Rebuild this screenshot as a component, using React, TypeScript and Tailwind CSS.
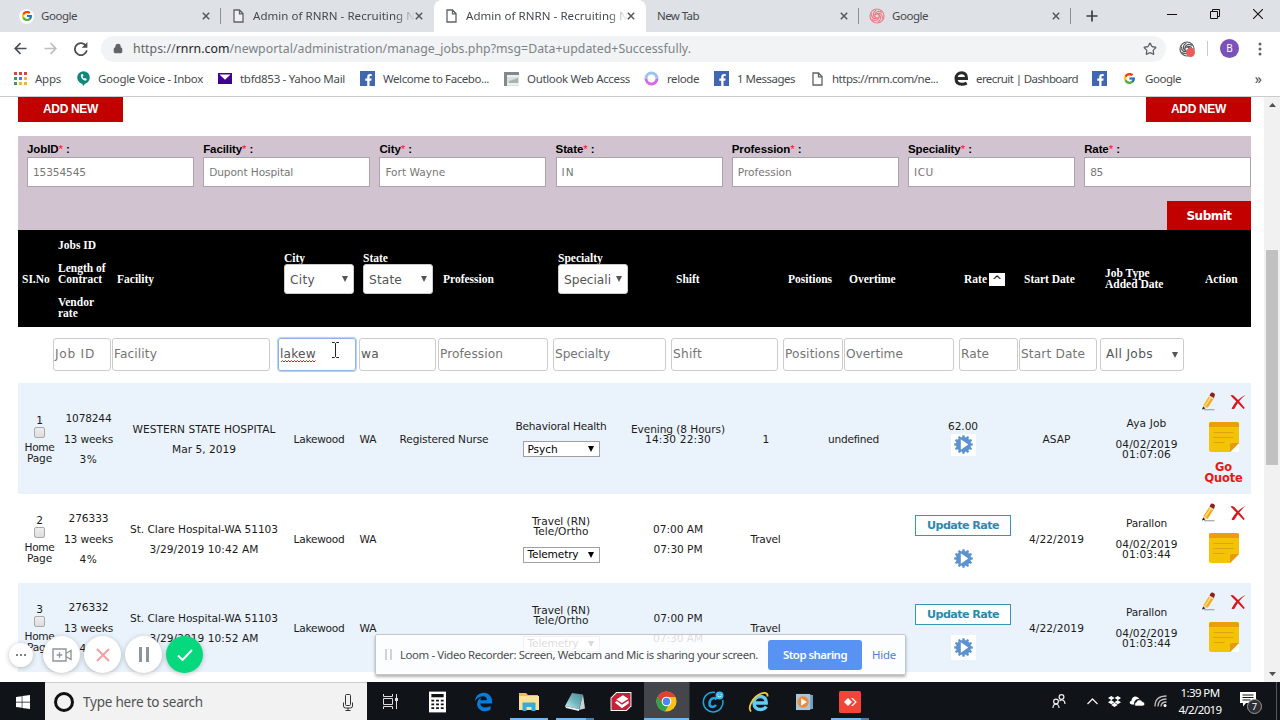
import { useLayoutEffect, useRef, type ReactNode } from "react";
import { FcGoogle } from "react-icons/fc";
import { FaEdgeLegacy, FaWindows, FaDropbox, FaFacebookF } from "react-icons/fa";
import { Lock, Star } from "lucide-react";

/* Single-line label that spreads its letters over a set width. */
function Fit({ w, className = "", children }: { w: number; className?: string; children: ReactNode }) {
  const ref = useRef<HTMLSpanElement>(null);
  useLayoutEffect(() => {
    const el = ref.current;
    if (!el) return;
    el.style.letterSpacing = "0px";
    const natural = el.getBoundingClientRect().width;
    const count = (el.textContent || "").length;
    if (count > 0) el.style.letterSpacing = `${(w - natural) / count}px`;
  }, [w]);
  return (
    <span ref={ref} className={"inline-block whitespace-pre " + className}>
      {children}
    </span>
  );
}

const Close = ({ className = "" }: { className?: string }) => (
  <svg className={"h-[8px] w-[8px] shrink-0 " + className} viewBox="0 0 8 8">
    <path d="M.8.8 7.2 7.2M7.2.8.8 7.2" stroke="#54585c" strokeWidth="1.5" />
  </svg>
);

const Page = ({ className = "" }: { className?: string }) => (
  <svg className={"h-[14px] w-[11px] shrink-0 " + className} viewBox="0 0 11 14">
    <path d="M1 1h5.5L10 4.6V13H1zM6.5 1v3.8H10" fill="#fff" fillOpacity=".5" stroke="#5f6368" strokeWidth="1.3" />
  </svg>
);

const Swirl = ({ color }: { color: string }) => (
  <svg className="h-[16px] w-[16px] shrink-0" viewBox="0 0 16 16" fill="none" stroke={color} strokeWidth="1.2">
    <circle cx="8" cy="8" r="7" />
    <circle cx="8" cy="8" r="2.2" />
    {[0, 60, 120, 180, 240, 300].map((a) => (
      <path key={a} d="M8 5.6C11 4.6 13.4 6.2 13.6 10.4" transform={`rotate(${a} 8 8)`} />
    ))}
  </svg>
);

const Fb = ({ className = "" }: { className?: string }) => (
  <div className={"flex h-[15px] w-[15px] shrink-0 items-end justify-end bg-[#4267b2] pr-[2px] " + className}>
    <FaFacebookF className="h-[12px] w-[9px] text-white" />
  </div>
);

function TabStrip() {
  return (
    <div className="flex h-8 shrink-0 items-center bg-[#dee1e6] text-[11.5px] text-[#45494d]">
      <div className="flex h-4 w-[221px] items-center border-r border-[#8d9196] pl-[19px]">
        <div className="flex h-[15px] w-[15px] items-center justify-center rounded-full bg-white">
          <FcGoogle className="h-[12px] w-[12px]" />
        </div>
        <Fit w={36} className="ml-[7px]">Google</Fit>
        <Close className="mr-[10px] ml-auto" />
      </div>
      <div className="flex h-full w-[213px] items-center pl-[12px]">
        <Page />
        <Fit w={162} className="mr-[-2px] ml-[9px] [mask-image:linear-gradient(to_right,#000_88%,transparent)]">Admin of RNRN - Recruiting N</Fit>
        <Close className="mr-[11px] ml-auto" />
      </div>
      <div className="flex h-full w-[212px] items-center rounded-t-lg bg-white pl-[12px]">
        <Page />
        <Fit w={162} className="mr-[-2px] ml-[9px] [mask-image:linear-gradient(to_right,#000_88%,transparent)]">Admin of RNRN - Recruiting N</Fit>
        <Close className="mr-[11px] ml-auto" />
      </div>
      <div className="flex h-4 w-[213px] items-center border-r border-[#8d9196] pl-[11px]">
        <Fit w={42}>New Tab</Fit>
        <Close className="mr-[10px] ml-auto" />
      </div>
      <div className="flex h-4 w-[212px] items-center border-r border-[#8d9196] pl-[10px]">
        <Swirl color="#ee7c86" />
        <Fit w={36} className="ml-[7px]">Google</Fit>
        <Close className="mr-[10px] ml-auto" />
      </div>
      <svg className="ml-[15px] h-[12px] w-[12px]" viewBox="0 0 12 12">
        <path d="M6 .5v11M.5 6h11" stroke="#3c4043" strokeWidth="1.7" />
      </svg>
      <div className="mb-1 ml-auto flex items-center gap-[33px] pr-[17px]">
        <svg className="h-[10px] w-[10px]" viewBox="0 0 10 10"><path d="M0 5.500h10" stroke="#111" /></svg>
        <svg className="h-[10px] w-[10px]" viewBox="0 0 10 10" fill="none" stroke="#111"><path d="M.5 2.500h7v7h-7zM2.500 2.500v-2h7v7h-2" /></svg>
        <svg className="h-[10px] w-[10px]" viewBox="0 0 10 10"><path d="M0 0l10 10M10 0 0 10" stroke="#111" strokeWidth="1.1" /></svg>
      </div>
    </div>
  );
}

function Toolbar() {
  return (
    <div className="flex h-[33px] shrink-0 items-center bg-white pl-[14px]">
      <svg className="h-[13px] w-[13px]" viewBox="0 0 14 14" fill="none" stroke="#4a4d51" strokeWidth="1.800"><path d="M13.500 7H1.500M7 1.300 1.300 7 7 12.700" /></svg>
      <svg className="ml-[17px] h-[13px] w-[13px]" viewBox="0 0 14 14" fill="none" stroke="#bcbec1" strokeWidth="1.800"><path d="M.5 7h12M7 1.300 12.700 7 7 12.700" /></svg>
      <svg className="ml-[17px] h-[14px] w-[14px]" viewBox="0 0 14 14" fill="none" stroke="#4a4d51" strokeWidth="1.8"><path d="M12 4A6 6 0 1 0 12.800 8.300" /><path d="M13.400 0v5.700H7.700z" fill="#4a4d51" stroke="none" /></svg>
      <div className="ml-[13px] flex h-[26px] w-[1065px] items-center rounded-full bg-[#f1f3f4] pr-[9px] pl-[12px] text-[12.300px] text-[#7d8286]">
        <Lock className="h-[11px] w-[10px] text-[#5f6368]" fill="#5f6368" strokeWidth={2.600} />
        <Fit w={558} className="mt-[2px] ml-[10px]">
          <span className="text-[#5f6368]">https://</span>
          <span className="text-[#202124]">rnrn.com</span>
          /newportal/administration/manage_jobs.php?msg=Data+updated+Successfully.
        </Fit>
        <Star className="ml-auto h-[14px] w-[14px] text-[#5f6368]" strokeWidth={2.200} />
      </div>
      <div className="relative ml-[13px] h-4 w-4">
        <Swirl color="#55585c" />
        <div className="absolute right-0 bottom-0 h-[9px] w-[9px] rounded-full bg-[#ee5a5a]" />
      </div>
      <div className="ml-[12px] h-[15px] w-px bg-[#c8cacd]" />
      <div className="ml-[12px] flex h-[19px] w-[19px] items-center justify-center rounded-full bg-[#7b52b9] text-[10px] text-white">B</div>
      <svg className="ml-[19px] h-[14px] w-[4px]" viewBox="0 0 4 14" fill="#5f6368"><circle cx="2" cy="2" r="1.500" /><circle cx="2" cy="7" r="1.500" /><circle cx="2" cy="12" r="1.500" /></svg>
    </div>
  );
}

function Bookmarks() {
  const dots = ["#d9453a", "#d9453a", "#d9453a", "#3f9a5a", "#3f7fe8", "#eeb63a", "#3f9a5a", "#eeb63a", "#eeb63a"];
  return (
    <div className="flex h-[32px] shrink-0 items-center border-b border-[#c9cbcd] bg-white pb-[4px] pl-[14px] text-[11.500px] text-[#484c50]">
      <div className="grid h-[13px] w-[13px] grid-cols-3 gap-[2px]">
        {dots.map((c, i) => <div key={i} style={{ background: c }} />)}
      </div>
      <Fit w={26} className="ml-[8px]">Apps</Fit>
      <svg className="ml-[16px] h-[15px] w-[13px]" viewBox="0 0 13 15"><circle cx="6.500" cy="6.500" r="6.300" fill="#12887a" /><path d="M4 11h5l-2.500 4z" fill="#12887a" /><path d="M4 3.500c-.8 3 2 6.500 5.200 6l.6-1.600-1.800-1-1 .7C6 7 5.500 6 5.600 5.400l1-.6-.9-1.900z" fill="#fff" /></svg>
      <Fit w={105} className="ml-[8px]">Google Voice - Inbox</Fit>
      <svg className="ml-[15px] h-[11px] w-[14px]" viewBox="0 0 14 11"><path d="M0 0h14v11H0z" fill="#400090" /><path d="M1.500 1.500h11L7 6.800z" fill="#fff" /></svg>
      <Fit w={105} className="ml-[8px]">tbfd853 - Yahoo Mail</Fit>
      <Fb className="ml-[15px]" />
      <Fit w={106} className="ml-[8px]">Welcome to Facebo...</Fit>
      <svg className="ml-[15px] h-[14px] w-[15px]" viewBox="0 0 15 14"><path d="M0 0h15v14H0z" fill="#dcdfdf" /><path d="M0 0h15v3H0zM0 3h3v11H0z" fill="#85888a" /><path d="M5 9l9-3v5H5z" fill="#a7b3ad" /><path d="M3 4h12M3 12h12" stroke="#fff" /></svg>
      <Fit w={103} className="ml-[8px]">Outlook Web Access</Fit>
      <svg className="ml-[14px] h-[15px] w-[15px]" viewBox="0 0 15 15" fill="none" strokeWidth="3"><path d="M2 7.500a5.500 5.500 0 0 1 11 0" stroke="#9cc4ef" /><path d="M2 7.500a5.500 5.500 0 0 0 11 0" stroke="#d66be8" /></svg>
      <Fit w={32} className="ml-[8px]">relode</Fit>
      <Fb className="ml-[15px]" />
      <Fit w={58} className="ml-[8px]">1 Messages</Fit>
      <Page className="ml-[17px]" />
      <Fit w={106} className="ml-[9px]">https://rnrn.com/ne...</Fit>
      <svg className="ml-[16px] h-[15px] w-[15px]" viewBox="0 0 15 15" fill="none" stroke="#27292b" strokeWidth="3"><path d="M2.500 7.500h10C12.700 3.500 10.500 1.700 7.700 1.700 4.500 1.700 2 4 2 7.600c0 3.800 2.500 5.700 5.900 5.700 2 0 3.600-.5 4.800-1.300" /></svg>
      <Fit w={102} className="ml-[7px]">erecruit | Dashboard</Fit>
      <Fb className="ml-[14px]" />
      <FcGoogle className="ml-[16px] h-[13px] w-[13px]" />
      <Fit w={36} className="ml-[9px]">Google</Fit>
      <span className="mr-[18px] ml-auto text-[14px] leading-none">»</span>
    </div>
  );
}

const fields = [
  ["JobID", "15354545", 53],
  ["Facility", "Dupont Hospital", 84],
  ["City", "Fort Wayne", 60],
  ["State", "IN", 13],
  ["Profession", "Profession", 54],
  ["Speciality", "ICU", 20],
  ["Rate", "85", 13],
] as const;

function AddForm() {
  return (
    <div className="mt-[14px] flex h-[94px] shrink-0 flex-col bg-[#d1c4d0] pl-[9px]">
      <div className="flex pt-[7px]">
        {fields.map(([label, value, w]) => (
          <div key={label} className="w-[176.200px] shrink-0">
            <div className="h-[14px] font-['Liberation_Sans',sans-serif] text-[11.500px] leading-[13px] font-bold tracking-[-0.1px] text-black">
              {label}<span className="font-normal text-[#f01818]">*</span> :
            </div>
            <div className="flex h-[30px] w-[167px] items-center border border-[#a9a3aa] bg-white pt-[2px] pl-[5px] text-[10.600px] text-[#777]">
              <Fit w={w}>{value}</Fit>
            </div>
          </div>
        ))}
      </div>
      <div className="mt-auto flex h-[29px] w-[84px] items-center justify-center self-end bg-[#c30000] text-[12px] font-bold text-white">
        <Fit w={45}>Submit</Fit>
      </div>
    </div>
  );
}

const Arrow = ({ className = "" }: { className?: string }) => (
  <svg className={"h-[6px] w-[6px] shrink-0 " + className} viewBox="0 0 6 6"><path d="M0 0h6L3 6z" fill="currentColor" /></svg>
);

const HeadSelect = ({ label, value, w }: { label: string; value: string; w: number }) => (
  <div className="-mt-[12px] flex flex-col">
    <span className="h-[11px]">{label}</span>
    <div className="flex h-[30px] w-[70px] items-center rounded-[3px] border border-[#ccc] bg-white pt-px pr-[5px] pl-[5px] font-['DejaVu_Sans',sans-serif] text-[12.200px] leading-[14px] font-normal text-[#555]">
      <Fit w={w} className="pt-[2px]">{value}</Fit>
      <Arrow className="ml-auto" />
    </div>
  </div>
);

function TableHead() {
  return (
    <div className="grid h-[97px] shrink-0 grid-cols-[36px_59px_167px_79px_80px_115px_118px_112px_61px_115px_60px_81px_100px_46px] items-center bg-black pt-px pl-[4px] font-['Liberation_Serif',serif] text-[11.500px] leading-[11px] font-bold text-white">
      <span>SI.No</span>
      <div className="flex flex-col gap-[12px]"><span>Jobs ID</span><span>Length of<br />Contract</span><span>Vendor<br />rate</span></div>
      <span>Facility</span>
      <HeadSelect label="City" value="City" w={25} />
      <HeadSelect label="State" value="State" w={33} />
      <span>Profession</span>
      <HeadSelect label="Specialty" value="Speciali" w={47} />
      <span>Shift</span>
      <span>Positions</span>
      <span>Overtime</span>
      <div className="flex items-center gap-[2px]">Rate<span className="h-[13px] w-[16px] bg-white text-center font-['DejaVu_Sans',sans-serif] text-[12px] leading-[17px] font-normal text-black">^</span></div>
      <span>Start Date</span>
      <span>Job Type<br />Added Date</span>
      <span>Action</span>
    </div>
  );
}

const Filter = ({ w, tw, text, className = "" }: { w: string; tw: number; text: string; className?: string }) => (
  <div className={"flex h-[33px] items-center rounded-[3px] border pl-px " + w + " " + (className || "border-[#ccc] text-[#757575]")}>
    <Fit w={tw}>{text}</Fit>
  </div>
);

function Filters() {
  return (
    <div className="grid h-[56px] shrink-0 grid-cols-[59px_166px_81px_79px_115px_118px_112px_61px_115px_60px_81px_84px] items-center pb-[2px] pl-[35px] text-[12.200px]">
      <Filter w="w-[58px]" tw={40} text="Job ID" />
      <Filter w="w-[158px]" tw={43} text="Facility" />
      <div className="relative">
        <Filter w="w-[78px]" tw={36} text="lakew" className="border-[#8fb3e6] pl-[2px] text-[#555] shadow-[0_0_1px_1px_#b8d0f2]" />
        <svg className="absolute top-[22px] left-[3px] h-[3px] w-[35px]" viewBox="0 0 35 3"><path d="M0 2l1.500-1.500L3 2l1.500-1.500L6 2l1.500-1.500L9 2l1.500-1.500L12 2l1.500-1.500L15 2l1.500-1.500L18 2l1.500-1.500L21 2l1.500-1.500L24 2l1.500-1.500L27 2l1.500-1.500L30 2l1.500-1.500L33 2l1.500-1.500" stroke="#e02020" fill="none" /></svg>
        <svg className="absolute top-[4px] left-[54px] h-[16px] w-[7px]" viewBox="0 0 7 16" fill="none" stroke="#222"><path d="M0 .5h2.500l1 1 1-1H7M3.500 1.500v13M0 15.500h2.500l1-1 1 1H7" /></svg>
      </div>
      <Filter w="w-[77px]" tw={18} text="wa" className="border-[#ccc] text-[#555]" />
      <Filter w="w-[110px]" tw={63} text="Profession" />
      <Filter w="w-[113px]" tw={55} text="Specialty" />
      <Filter w="w-[107px]" tw={29} text="Shift" />
      <Filter w="w-[60px]" tw={55} text="Positions" />
      <Filter w="w-[110px]" tw={57} text="Overtime" />
      <Filter w="w-[59px]" tw={28} text="Rate" />
      <Filter w="w-[78px]" tw={64} text="Start Date" />
      <div className="flex h-[33px] w-[84px] items-center rounded-[3px] border border-[#ccc] pt-px pr-[5px] pl-[5px] text-[#555]">
        <Fit w={47}>All Jobs</Fit>
        <Arrow className="ml-auto" />
      </div>
    </div>
  );
}

const Gear = ({ className }: { className: string }) => (
  <div className={"flex w-[25px] shrink-0 items-center justify-center bg-white " + className}>
    <svg className="h-[19px] w-[19px]" viewBox="-10 -10 20 20" fill="#5a93cf">
      <circle r="7.800" />
      {[0, 30, 60, 90, 120, 150, 180, 210, 240, 270, 300, 330].map((a) => (
        <path key={a} d="M-1.500-7-1.100-9.800h2.200L1.500-7z" transform={`rotate(${a})`} />
      ))}
      <path d="M-2.800-5.500 5 0-2.800 5.500z" fill="#fff" />
    </svg>
  </div>
);

const Pencil = () => (
  <svg className="h-[19px] w-[16px]" viewBox="0 0 16 19">
    <path d="M3 17.700h10.500" stroke="#a5a5a5" strokeWidth="1.200" />
    <path d="M8.500 3.500l4.500 2.500-6 9.500L2 17l.8-4.500z" fill="#f5a823" />
    <path d="M10 5 4.500 13.500" stroke="#ffdc70" strokeWidth="1.700" />
    <path d="M8.500 3.500 10 .8q2.500-.8 4 1.500L13 6z" fill="#8d1f1c" />
    <path d="M8.300 3.700l4.500 2.700-.7 1L7.600 4.800z" fill="#e8e0d8" />
    <path d="M2.800 12.500 6.500 15.700 1.500 17z" fill="#f3d3a0" />
    <path d="M2.200 14.500 4.200 16.500 1 17.500z" fill="#222" />
  </svg>
);

const Cross = () => (
  <svg className="h-[16px] w-[16px]" viewBox="0 0 16 16" fill="#d9151a">
    <path d="M.5 1.500Q2 .5 3.500 1.500 8 5.500 14.800 14l-1.300 1Q7 8 .5 1.500z" />
    <path d="M15.800.8Q9 6 4.500 14.500q-1.500 1-3 0Q6 5.500 15.800.8z" />
  </svg>
);

const Note = () => (
  <svg className="h-[30px] w-[30px]" viewBox="0 0 30 30">
    <path d="M30 19v11H19z" fill="#fff" />
    <path d="M2 0h26q2 0 2 2v19l-9 9H2q-2 0-2-2V2Q0 0 2 0" fill="#f3c305" />
    <path d="M2 0h26q2 0 2 2v3H0V2Q0 0 2 0" fill="#eb9d0c" />
    <path d="M30 21h-7q-2 0-2 2v7z" fill="#e89a0c" />
    <path d="M4.500 10.500h20M4.500 15.500h20M4.500 20.500h11" stroke="#e5a00d" strokeWidth="1.100" />
  </svg>
);

interface Job {
  n: string; id: string; idW: number; pct: string; fac: string; facW: number; date: string; dateW: number; prof?: string;
  spec: [string, number][]; sel: string; selW: number; shift: [string, number][]; pos: string; posW: number; ot?: string; rate?: string;
  start: string; startW: number; type: string; typeW: number; time: string; quote?: boolean; row: string;
}

const jobs: Job[] = [
  { n: "1", id: "1078244", idW: 46, pct: "3%", fac: "WESTERN STATE HOSPITAL", facW: 143, date: "Mar 5, 2019", dateW: 64, prof: "Registered Nurse", spec: [["Behavioral Health", 91]], sel: "Psych", selW: 30, shift: [["Evening (8 Hours)", 94], ["14:30 22:30", 66]], pos: "1", posW: 6, ot: "undefined", rate: "62.00", start: "ASAP", startW: 28, type: "Aya Job", typeW: 40, time: "01:07:06", quote: true, row: "h-[111px] bg-[#eaf3fb]" },
  { n: "2", id: "276333", idW: 40, pct: "4%", fac: "St. Clare Hospital-WA 51103", facW: 148, date: "3/29/2019 10:42 AM", dateW: 109, spec: [["Travel (RN)", 58], ["Tele/Ortho", 55]], sel: "Telemetry", selW: 51, shift: [["07:00 AM", 50], ["07:30 PM", 49]], pos: "Travel", posW: 30, start: "4/22/2019", startW: 55, type: "Parallon", typeW: 41, time: "01:03:44", row: "h-[89px] bg-white" },
  { n: "3", id: "276332", idW: 40, pct: "4%", fac: "St. Clare Hospital-WA 51103", facW: 148, date: "3/29/2019 10:52 AM", dateW: 109, spec: [["Travel (RN)", 58], ["Tele/Ortho", 55]], sel: "Telemetry", selW: 51, shift: [["07:00 PM", 49], ["07:30 AM", 50]], pos: "Travel", posW: 30, start: "4/22/2019", startW: 55, type: "Parallon", typeW: 41, time: "01:03:44", row: "h-[89px] bg-[#eaf3fb]" },
];

function JobRow({ job }: { job: Job }) {
  return (
    <div className={"grid shrink-0 grid-cols-[42px_57px_172px_60px_38px_114px_120px_114px_61px_115px_104px_83px_97px_56px] items-center pt-px text-center text-[10.600px] leading-[10.500px] text-[#1c1c1c] " + job.row}>
      <div className="flex flex-col items-center pl-px">
        <span>{job.n}</span>
        <div className="my-[2px] mb-[4px] h-[11px] w-[11px] rounded-[2px] border border-[#aaa] bg-linear-to-b from-[#eee] to-[#ddd]" />
        <Fit w={30}>Home</Fit><Fit w={25}>Page</Fit>
      </div>
      <div className="flex flex-col items-center gap-[10px]"><Fit w={job.idW}>{job.id}</Fit><Fit w={49}>13 weeks</Fit><Fit w={18}>{job.pct}</Fit></div>
      <div className="flex flex-col items-center gap-[10px] pl-[2px]"><Fit w={job.facW}>{job.fac}</Fit><Fit w={job.dateW}>{job.date}</Fit></div>
      <div><Fit w={51}>Lakewood</Fit></div>
      <div><Fit w={17}>WA</Fit></div>
      <div>{job.prof && <Fit w={89}>{job.prof}</Fit>}</div>
      <div className="flex flex-col items-center">
        {job.spec.map(([s, w]) => <Fit key={s} w={w}>{s}</Fit>)}
        <div className="mt-[10px] flex h-[16px] w-[77px] items-center border border-[#a0a0a0] bg-white pr-[5px] pl-[4px] text-black"><Fit w={job.selW}>{job.sel}</Fit><Arrow className="ml-auto" /></div>
      </div>
      <div className={"flex flex-col items-center " + (job.quote ? "pb-[10px]" : "gap-[10px]")}>{job.shift.map(([s, w]) => <Fit key={s} w={w}>{s}</Fit>)}</div>
      <div><Fit w={job.posW}>{job.pos}</Fit></div>
      <div>{job.ot && <Fit w={51}>{job.ot}</Fit>}</div>
      {job.rate ? (
        <div className="flex flex-col items-center pb-px"><Fit w={30}>{job.rate}</Fit><Gear className="mt-[2px] h-[22px]" /></div>
      ) : (
        <div className="flex flex-col items-center pt-[8px]">
          <div className="flex h-[21px] w-[96px] shrink-0 items-center justify-center border border-[#3a94b4] bg-white pt-px text-[11.200px] font-bold text-[#2c8aac]"><Fit w={72}>Update Rate</Fit></div>
          <Gear className="mt-[10px] h-[25px]" />
        </div>
      )}
      <div><Fit w={job.startW}>{job.start}</Fit></div>
      <div className="flex flex-col items-center"><Fit w={job.typeW} className="mb-[10px]">{job.type}</Fit><Fit w={62}>04/02/2019</Fit><Fit w={49}>{job.time}</Fit></div>
      <div className="flex flex-col items-center self-start pt-[8px]">
        <div className="flex w-full items-center gap-[13px] pl-[6px]">
          <Pencil />
          <Cross />
        </div>
        <div className="mt-[11px] ml-[2px]"><Note /></div>
        {job.quote && <div className="mt-[10px] ml-[1px] flex flex-col items-center text-[11.400px] leading-[11px] font-bold text-[#f01414]"><Fit w={17}>Go</Fit><Fit w={38}>Quote</Fit></div>}
      </div>
    </div>
  );
}

function LoomControls() {
  return (
    <div className="absolute top-[636px] left-[9px] flex items-center">
      <div className="flex h-[24px] w-[24px] items-center justify-center gap-[2px] rounded-full bg-white shadow-[0_1px_5px_rgba(0,0,0,.25)]">
        <i className="h-[2px] w-[2px] rounded-full bg-[#555]" /><i className="h-[2px] w-[2px] rounded-full bg-[#555]" /><i className="h-[2px] w-[2px] rounded-full bg-[#555]" />
      </div>
      <div className="ml-[10px] flex gap-[4px]">
        <div className="flex h-[37px] w-[37px] items-center justify-center rounded-full bg-white shadow-[0_1px_5px_rgba(0,0,0,.25)]">
          <svg className="h-[14px] w-[20px]" viewBox="0 0 20 14" fill="none" stroke="#8f959b" strokeWidth="1.400"><path d="M1 1h13v12H1zM14 5.500l5-3v9l-5-3M7.500 4.200v5.600M4.700 7h5.600" /></svg>
        </div>
        <div className="flex h-[37px] w-[37px] items-center justify-center rounded-full bg-white shadow-[0_1px_5px_rgba(0,0,0,.25)]">
          <svg className="h-[14px] w-[14px]" viewBox="0 0 14 14" stroke="#f0a1a0" strokeWidth="2"><path d="M1 1l12 12M13 1 1 13" /></svg>
        </div>
        <div className="flex h-[37px] w-[37px] items-center justify-center gap-[4px] rounded-full bg-white shadow-[0_1px_5px_rgba(0,0,0,.25)]">
          <i className="h-[15px] w-[3px] bg-[#8f959b]" /><i className="h-[15px] w-[3px] bg-[#8f959b]" />
        </div>
        <div className="flex h-[37px] w-[37px] items-center justify-center rounded-full bg-[#06d87d] shadow-[0_1px_5px_rgba(0,0,0,.25)]">
          <svg className="h-[12px] w-[16px]" viewBox="0 0 16 12" fill="none" stroke="#fff" strokeWidth="2"><path d="M1 6.500 5.500 11 15 1" /></svg>
        </div>
      </div>
    </div>
  );
}

function SharingBar() {
  return (
    <div className="absolute top-[634px] left-[375px] flex h-[41px] w-[531px] items-center rounded-[2px] border border-[#c4c7ca] bg-white/85 pl-[9px] text-[11.400px] text-[#4a4d51] shadow-[0_2px_3px_rgba(0,0,0,.3)]">
      <i className="h-[11px] w-[2px] bg-[#d0d2d4]" /><i className="ml-[3px] h-[11px] w-[2px] bg-[#d0d2d4]" />
      <Fit w={358} className="ml-[8px]">Loom - Video Recorder: Screen, Webcam and Mic is sharing your screen.</Fit>
      <div className="ml-[10px] flex h-[30px] w-[94px] items-center justify-center rounded-[3px] bg-[#5892f2] font-semibold text-white"><Fit w={64}>Stop sharing</Fit></div>
      <Fit w={24} className="ml-[10px] text-[#4f7fd0]">Hide</Fit>
    </div>
  );
}

/* Taskbar button; an open program has a blue line below, a stacked one a darker tail on it. */
const Slot = ({ className = "", open = false, stacked = false, children }: { className?: string; open?: boolean; stacked?: boolean; children: ReactNode }) => (
  <div className={"relative flex h-full w-[46px] shrink-0 items-center justify-center pt-px " + className}>
    {children}
    {open && (
      <div className="absolute bottom-0 left-[4px] flex h-[2px] w-[38px] bg-[#77b8ec]">
        {stacked && <div className="ml-auto h-full w-[8px] bg-[#4f7fa8]" />}
      </div>
    )}
  </div>
);

function Taskbar() {
  return (
    <div className="relative flex h-[38px] shrink-0 items-center bg-[#101317] text-white">
      <Slot className="w-[45px]!"><FaWindows className="h-[16px] w-[16px]" /></Slot>
      <div className="flex h-full w-[322px] items-center border-t border-[#ccc] bg-[#f2f2f2] pt-px pr-[14px] pl-[9px] text-[13.500px] text-[#505254]">
        <div className="h-[20px] w-[20px] rounded-full border-[3px] border-[#111]" />
        <Fit w={120} className="ml-[9px]">Type here to search</Fit>
        <svg className="ml-auto h-[17px] w-[10px]" viewBox="0 0 10 17" fill="none" stroke="#333"><rect x="2.500" y=".5" width="5" height="11" rx="1" /><path d="M.5 8.500v3.500q0 2 2 2h5q2 0 2-2V8.500M5 14v2.500M2.500 16.500h5" /></svg>
      </div>
      <Slot className="w-[46px]!">
        <svg className="h-[15px] w-[17px]" viewBox="0 0 17 15" fill="none" stroke="#ddd"><path d="M1.500 0v2.500h9V0M1.500 4.500h9v6h-9zM1.500 15v-2.500h9V15M14.500 0v15" /><path d="M13 4h3v3h-3z" fill="#ddd" stroke="none" /></svg>
      </Slot>
      <Slot className="w-[48px]!">
        <svg className="h-[22px] w-[17px]" viewBox="0 0 18 22"><path d="M0 0h18v22H0z" fill="#fff" /><path d="M2.500 2.500h13v3.500h-13z" fill="#111" />{[8.500, 12.500, 16.500].map((y) => <path key={y} d={`M2.500 ${y}h3v2h-3zM7.500 ${y}h3v2h-3zM12.500 ${y}h3v2h-3z`} fill="#111" />)}</svg>
      </Slot>
      <Slot className="w-[45px]!"><FaEdgeLegacy className="h-[20px] w-[19px] text-[#0b7bd8]" /></Slot>
      <Slot open>
        <svg className="h-[18px] w-[20px]" viewBox="0 0 20 18"><path d="M0 0h7l2 2h10v15H0z" fill="#e9bf56" /><path d="M0 3h20v14H0z" fill="#fbe297" /><path d="M3.500 9.500h13V18h-4v-4h-5v4h-4z" fill="#38a9d9" /></svg>
      </Slot>
      <Slot open stacked>
        <svg className="h-[20px] w-[20px]" viewBox="0 0 20 20"><defs><linearGradient id="pad" x1="0" y1="1" x2="1" y2="0"><stop offset="0" stopColor="#d3eef0" /><stop offset=".5" stopColor="#6fb4be" /><stop offset="1" stopColor="#4c8c97" /></linearGradient></defs><path d="M7 1l11 1.500L14 17 0 14z" fill="url(#pad)" /><path d="M18 2.500l2 14-6 1.500z" fill="#c8d3d4" /><path d="M0 14l14 3v2L1 16z" fill="#eef4f4" /></svg>
      </Slot>
      <Slot>
        <svg className="h-[19px] w-[22px]" viewBox="0 0 22 20"><path d="M6 0h16v15l-5 5H0V6z" fill="#fff" /><path d="M6.500 1H21v13.500L16.500 19H1V6.500z" fill="#c91f37" /><path d="M6 8l7-4.500L19 7l-7 4.500zM4.500 11l2-1.500 5.500 4 7-4.500v3L12 17z" fill="#fff" /></svg>
      </Slot>
      <Slot className="border-r border-[#2a2d31] bg-[#43464a]">
        <svg className="h-[21px] w-[21px]" viewBox="0 0 48 48"><circle cx="24" cy="24" r="23" fill="#fbc116" /><path d="M24 24 4.100 12.500a23 23 0 0 0 16 34.200L32 28z" fill="#30a350" /><path d="M24 13.500h20.500A23 23 0 0 0 4.100 12.500L15 29z" fill="#e24034" /><circle cx="24" cy="24" r="11" fill="#fff" /><circle cx="24" cy="24" r="8.500" fill="#4a87ee" /></svg>
        <div className="absolute bottom-0 left-0 h-[2px] w-full bg-[#77b8ec]" />
      </Slot>
      <Slot>
        <svg className="h-[22px] w-[22px]" viewBox="0 0 22 22" fill="none" stroke="#20a4e0"><path d="M13 1.500A9.800 9.800 0 1 0 20.700 9" strokeWidth="1.500" /><path d="M14.500 8.500C12.500 5.500 8 7.500 7.500 12c-.3 4.500 4 5 6.500 2" strokeWidth="2.500" /><circle cx="17.500" cy="4.500" r="4" fill="#35b8f2" stroke="none" /><path d="M15.500 5q2 2 4 0M16 3v.8M19 3v.8" stroke="#fff" strokeWidth=".8" /></svg>
      </Slot>
      <Slot>
        <svg className="h-[22px] w-[22px]" viewBox="0 0 22 22" fill="none"><path d="M6.500 12h11.700C18.500 8 16 5.500 12.500 5.500c-4 0-6.500 2.500-6.500 6.500 0 4.500 3 6.500 6.500 6.500 2.500 0 4.500-.8 5.700-3" stroke="#62ccf4" strokeWidth="3.400" /><path d="M3 20.500C-.5 17 4 7.500 11 3.500c4.500-2.500 9-2.500 8.500 2" stroke="#f3c832" strokeWidth="1.800" /></svg>
      </Slot>
      <Slot className="w-[45px]!">
        <svg className="h-[18px] w-[19px]" viewBox="0 0 20 19"><path d="M4 1l15 1v15l-15 1z" fill="#6f9fc2" /><path d="M1 1h15v17H1z" fill="#a9c6da" /><circle cx="8.500" cy="9.500" r="6" fill="#ee8a3a" /><path d="M6.500 5.500l6 4-6 4z" fill="#fff" /></svg>
      </Slot>
      <Slot open stacked>
        <svg className="h-[22px] w-[22px]" viewBox="0 0 22 22"><rect width="22" height="22" rx="1.500" fill="#f24537" /><path d="M9 7l4 4-4 4-4-4zM12 7h1.800l4 4-4 4H12l4-4z" fill="#fff" /></svg>
      </Slot>
      <div className="ml-auto flex h-full items-center">
        <svg className="h-[15px] w-[14px]" viewBox="0 0 14 15" fill="none" stroke="#eee" strokeWidth="1.200"><circle cx="9.500" cy="3" r="2.400" /><circle cx="4" cy="7.500" r="2.400" /><path d="M1 14c0-5 6-5 6 0M7.500 7c2.500-2 5.500-1 5.500 3" /></svg>
        <svg className="ml-[21px] h-[7px] w-[11px]" viewBox="0 0 11 7" fill="none" stroke="#eee" strokeWidth="1.300"><path d="M.5 6 5.500 1l5 5" /></svg>
        <FaDropbox className="ml-[10px] h-[13px] w-[13px]" />
        <svg className="ml-[8px] h-[10px] w-[16px]" viewBox="0 0 16 10"><path d="M3 8.500C0 8.500 0 5 2.500 4.700 2.500 1.500 6-1 9 1.500c1.300 1 1.500 1.500 1.500 1.500C6.500 3 5 5 5 8.500z" fill="#fff" /><path d="M6 10q-1.500-3 1.500-4C8 3.500 12 3 13 5.500c3.500.5 3.500 4.500.5 4.500z" fill="#fff" stroke="#101317" strokeWidth=".6" /></svg>
        <svg className="ml-[9px] h-[12px] w-[13px]" viewBox="0 0 13 12" fill="none" stroke="#bbb"><path d="M1 11.500Q1 1 12.500 1M4 11.500Q4 4 12.500 4M7 11.500Q7 7 12.500 7" strokeWidth="1.300" /><circle cx="11" cy="10.500" r="1.500" fill="#fff" stroke="none" /></svg>
        <div className="ml-[11px] flex w-[44px] flex-col items-center text-[11.500px] leading-[17px]"><Fit w={39}>1:39 PM</Fit><Fit w={43}>4/2/2019</Fit></div>
        <div className="relative ml-[18px] h-[20px] w-[24px]">
          <svg className="h-[16px] w-[16px]" viewBox="0 0 16 16"><path d="M0 1h16v11H6l-3 3.500V12H0z" fill="#fff" /><path d="M2.500 4h11M2.500 6.500h11M2.500 9h8" stroke="#101317" /></svg>
          <div className="absolute top-[8px] left-[7px] flex h-[15px] w-[15px] items-center justify-center rounded-full border border-[#999] bg-[#2d3033] text-[9.500px] leading-none">7</div>
        </div>
        <div className="ml-[12px] h-full w-[4px] border-l border-[#555]" />
      </div>
    </div>
  );
}

export default function App() {
  return (
    <div className="relative flex h-[720px] w-[1280px] flex-col overflow-hidden bg-white font-['Noto_Sans',sans-serif]">
      <TabStrip />
      <Toolbar />
      <Bookmarks />
      <div className="flex min-h-0 flex-1 overflow-hidden">
        <div className="flex w-[1264px] flex-col pr-[13px] pl-[18px] font-['DejaVu_Sans',sans-serif]">
          <div className="flex shrink-0 justify-between font-['Liberation_Sans',sans-serif] text-[12px] font-bold text-white">
            <div className="flex h-[25px] w-[105px] items-center justify-center bg-[#c30000] pb-px"><Fit w={55}>ADD NEW</Fit></div>
            <div className="flex h-[25px] w-[105px] items-center justify-center bg-[#c30000] pb-px"><Fit w={55}>ADD NEW</Fit></div>
          </div>
          <AddForm />
          <TableHead />
          <Filters />
          {jobs.map((j) => <JobRow key={j.n} job={j} />)}
        </div>
        <div className="flex w-[16px] flex-col items-center bg-[#f1f1f1] pt-[6px] pb-[6px]">
          <svg className="h-[4px] w-[7px]" viewBox="0 0 7 4"><path d="M0 4 3.500 0 7 4z" fill="#505050" /></svg>
          <div className="mt-[143px] h-[215px] w-[12px] bg-[#c1c1c1]" />
          <svg className="mt-auto h-[4px] w-[7px]" viewBox="0 0 7 4"><path d="M0 0l3.500 4L7 0z" fill="#505050" /></svg>
        </div>
      </div>
      <Taskbar />
      <LoomControls />
      <SharingBar />
    </div>
  );
}
